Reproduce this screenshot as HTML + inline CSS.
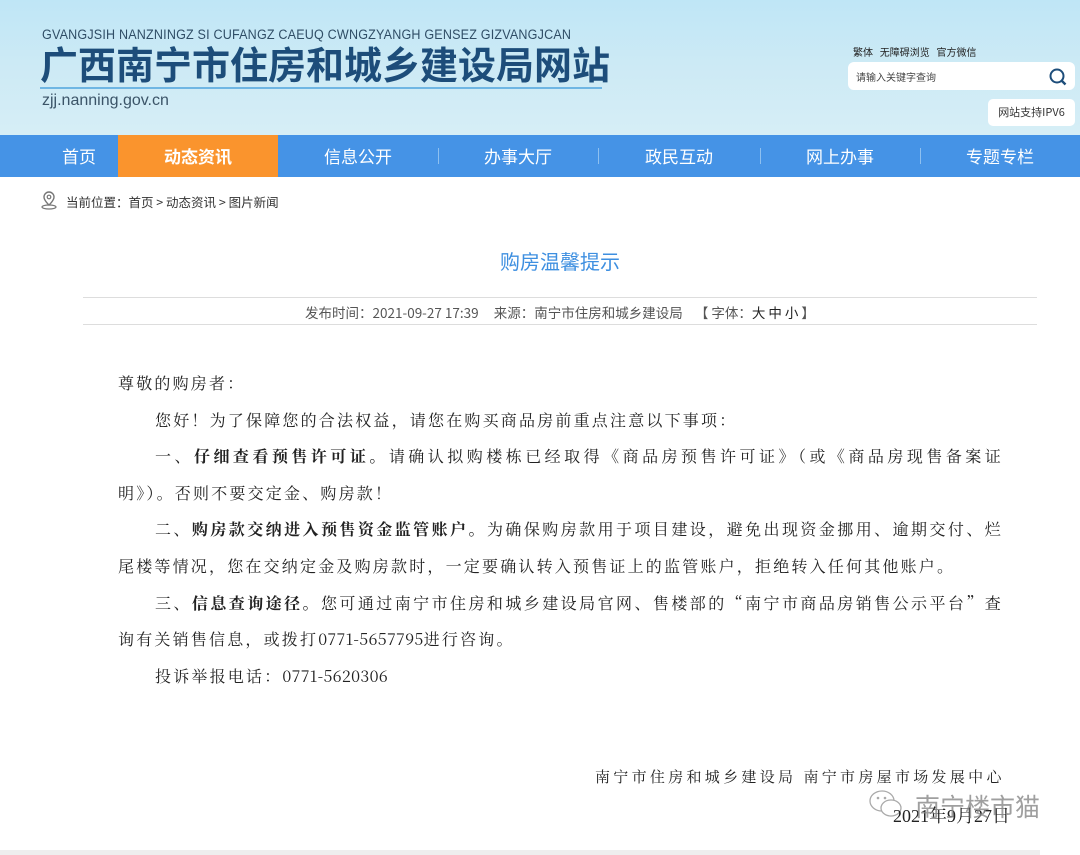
<!DOCTYPE html>
<html><head><meta charset="utf-8">
<style>
*{margin:0;padding:0;box-sizing:border-box}
body{width:1080px;height:855px;overflow:hidden;background:#fff;font-family:"Liberation Sans","Noto Sans CJK SC",sans-serif;position:relative}
.hdr{position:absolute;left:0;top:0;width:1080px;height:135px;background:linear-gradient(180deg,#bfe6f6 0%,#cdeaf5 50%,#d6eef6 100%)}
.en{position:absolute;left:42px;top:27px;font-size:13.5px;color:#2f4d66;letter-spacing:0.2px;transform:scaleX(0.93);transform-origin:left}
.cn{position:absolute;left:40px;top:38px;font-size:38px;font-weight:bold;color:#1d4d7a;font-family:"Noto Sans CJK SC",sans-serif;line-height:50px}
.uline{position:absolute;left:40px;top:87px;width:562px;height:2px;background:#6fb6e3}
.url{position:absolute;left:42px;top:92px;font-size:16px;color:#3b5468}
.tl{position:absolute;left:853px;top:44px;font-size:10px;color:#222;font-family:"Noto Sans CJK SC",sans-serif}
.srch{position:absolute;left:848px;top:62px;width:227px;height:28px;background:#fff;border-radius:6px}
.srch span{position:absolute;left:8px;top:7px;font-size:10px;color:#444;font-family:"Noto Sans CJK SC",sans-serif}
.ipv{position:absolute;left:988px;top:99px;width:87px;height:27px;background:#fff;border-radius:5px;font-size:11px;color:#333;text-align:center;line-height:27px;font-family:"Noto Sans CJK SC",sans-serif}
.nav{position:absolute;left:0;top:135px;width:1080px;height:42px;background:#4593e6}
.nav div{position:absolute;top:0;height:42px;line-height:42px;font-size:17px;color:#fff;text-align:center;font-family:"Noto Sans CJK SC",sans-serif}
.nav .sep{width:1px;height:16px;top:13px;background:#8ec0f0}
.crumb{position:absolute;left:66px;top:192px;font-size:12.5px;color:#333;font-family:"Noto Sans CJK SC",sans-serif}
h1{position:absolute;left:0;width:1120px;top:246px;text-align:center;font-size:20px;font-weight:normal;color:#3e8fe0;font-family:"Noto Sans CJK SC",sans-serif}
.meta{position:absolute;left:83px;top:297px;width:954px;height:28px;border-top:1px solid #ddd;border-bottom:1px solid #ddd;text-align:center;line-height:28px;font-size:13.5px;color:#555;font-family:"Noto Sans CJK SC",sans-serif}
.body{position:absolute;left:118px;top:365px;width:885px;font-family:"Noto Serif CJK SC","Noto Sans CJK SC",serif;font-size:16px;color:#222;line-height:36.6px;letter-spacing:2.2px;text-align:justify}
.body p.i{text-indent:37px}
.n{letter-spacing:0.3px}
.sig{position:absolute;left:595px;top:766px;font-family:"Noto Serif CJK SC",serif;font-size:15px;color:#222;letter-spacing:3.3px;white-space:nowrap}
.date{position:absolute;left:893px;top:802px;font-family:"Liberation Serif","Noto Serif CJK SC",serif;font-size:18px;color:#222}
.wm{position:absolute;left:915px;top:788px;font-size:25px;color:#888;font-family:"Noto Sans CJK SC",sans-serif;opacity:.8}
.foot{position:absolute;left:0;top:850px;width:1040px;height:5px;background:#eee}
</style></head><body>
<div class="hdr">
<div class="en">GVANGJSIH NANZNINGZ SI CUFANGZ CAEUQ CWNGZYANGH GENSEZ GIZVANGJCAN</div>
<div class="cn">广西南宁市住房和城乡建设局网站</div>
<div class="uline"></div>
<div class="url">zjj.nanning.gov.cn</div>
<div class="tl">繁体&nbsp;&nbsp;&nbsp;无障碍浏览&nbsp;&nbsp;&nbsp;官方微信</div>
<div class="srch"><span>请输入关键字查询</span>
<svg style="position:absolute;left:200px;top:5px" width="20" height="20" viewBox="0 0 20 20"><circle cx="9" cy="9" r="6.5" fill="none" stroke="#1d4d7a" stroke-width="2"/><path d="M13.5 13.5l4 4" stroke="#1d4d7a" stroke-width="2.4"/></svg></div>
<div class="ipv">网站支持IPV6</div>
</div>
<div class="nav">
<div style="left:40px;width:78px">首页</div>
<div style="left:118px;width:160px;background:#fa942d;font-weight:bold">动态资讯</div>
<div style="left:278px;width:160px">信息公开</div>
<div class="sep" style="left:438px"></div>
<div style="left:438px;width:160px">办事大厅</div>
<div class="sep" style="left:598px"></div>
<div style="left:598px;width:162px">政民互动</div>
<div class="sep" style="left:760px"></div>
<div style="left:760px;width:160px">网上办事</div>
<div class="sep" style="left:920px"></div>
<div style="left:920px;width:160px">专题专栏</div>
</div>
<svg style="position:absolute;left:40px;top:190px" width="18" height="20" viewBox="0 0 18 20"><path d="M9 2a5 5 0 0 0-5 5c0 3.5 5 8 5 8s5-4.5 5-8a5 5 0 0 0-5-5z" fill="none" stroke="#777" stroke-width="1.4"/><circle cx="9" cy="7" r="1.8" fill="none" stroke="#777" stroke-width="1.2"/><ellipse cx="9" cy="17" rx="7" ry="2" fill="none" stroke="#777" stroke-width="1.2"/></svg>
<div class="crumb">当前位置：首页 &gt; 动态资讯 &gt; 图片新闻</div>
<h1>购房温馨提示</h1>
<div class="meta">发布时间：2021-09-27 17:39&nbsp;&nbsp;&nbsp;&nbsp;&nbsp;来源：南宁市住房和城乡建设局&nbsp;&nbsp;&nbsp;&nbsp;【 字体：<span style="color:#222">大 中 小</span> 】</div>
<div class="body">
<p>尊敬的购房者：</p>
<p class="i">您好！为了保障您的合法权益，请您在购买商品房前重点注意以下事项：</p>
<p class="i">一、<b>仔细查看预售许可证。</b>请确认拟购楼栋已经取得《商品房预售许可证》（或《商品房现售备案证明》）。否则不要交定金、购房款！</p>
<p class="i">二、<b>购房款交纳进入预售资金监管账户。</b>为确保购房款用于项目建设，避免出现资金挪用、逾期交付、烂尾楼等情况，您在交纳定金及购房款时，一定要确认转入预售证上的监管账户，拒绝转入任何其他账户。</p>
<p class="i">三、<b>信息查询途径。</b>您可通过南宁市住房和城乡建设局官网、售楼部的“南宁市商品房销售公示平台”查询有关销售信息，或拨打<span class="n">0771-5657795</span>进行咨询。</p>
<p class="i">投诉举报电话：<span class="n">0771-5620306</span></p>
</div>
<div class="sig">南宁市住房和城乡建设局 南宁市房屋市场发展中心</div>
<svg style="position:absolute;left:868px;top:788px" width="36" height="32" viewBox="0 0 36 32"><ellipse cx="14" cy="13" rx="12" ry="10" fill="none" stroke="#aaa" stroke-width="1.3"/><ellipse cx="23" cy="20" rx="10" ry="8" fill="#fff" stroke="#aaa" stroke-width="1.3"/><circle cx="10" cy="10" r="1.3" fill="#aaa"/><circle cx="17" cy="10" r="1.3" fill="#aaa"/></svg>
<div class="date">2021年9月27日</div>
<div class="wm">南宁楼市猫</div>
<div class="foot"></div>
</body></html>
